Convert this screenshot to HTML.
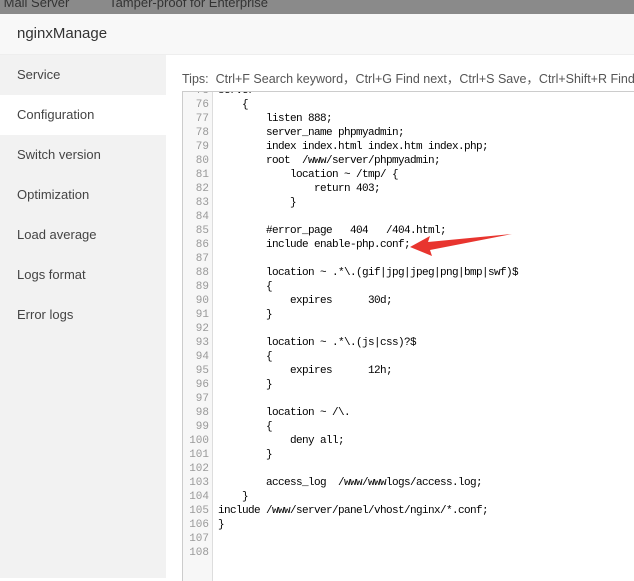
<!DOCTYPE html>
<html><head><meta charset="utf-8"><style>
*{margin:0;padding:0;box-sizing:border-box}
body{width:634px;height:578px;overflow:hidden;background:#fff;font-family:"Liberation Sans",sans-serif;position:relative}
.top{position:absolute;left:0;top:0;width:634px;height:14px;background:#8a8a8a;color:#333;font-size:13px;line-height:6px;overflow:hidden}
.hdr{position:absolute;left:0;top:14px;width:634px;height:41px;background:#f8f8f8;border-bottom:1px solid #eee;font-size:15px;color:#333;padding-left:17px;line-height:40px}
.side{position:absolute;left:0;top:55px;width:166px;height:523px;background:#f2f2f2}
.side div{height:40px;line-height:40px;padding-left:17px;font-size:13px;color:#444}
.side .on{background:#fff}
.tips{position:absolute;left:182px;top:68px;font-size:12.5px;color:#555;white-space:nowrap}
.ed{position:absolute;left:182px;top:91px;width:460px;height:490px;border-left:1px solid #ccc;border-top:1px solid #ccc;overflow:hidden}
.gut{position:absolute;left:0;top:0;width:30px;height:100%;background:#f7f7f7;border-right:1px solid #ddd}
.ln{position:absolute;left:0;width:26px;text-align:right;font:11px "Liberation Mono",monospace;color:#999;line-height:14px}
.cd{position:absolute;left:35px;font:11px "Liberation Mono",monospace;color:#000;line-height:14px;white-space:pre;letter-spacing:-0.6px}
</style></head><body>
<div class="top">&nbsp;Mail Server&nbsp;&nbsp;&nbsp;&nbsp;&nbsp;&nbsp;&nbsp;&nbsp;&nbsp;&nbsp;&nbsp;Tamper-proof for Enterprise</div>
<div class="hdr">nginxManage</div>
<div class="side"><div>Service</div><div class="on">Configuration</div><div>Switch version</div><div>Optimization</div><div>Load average</div><div>Logs format</div><div>Error logs</div></div>
<div class="tips">Tips:&nbsp; Ctrl+F Search keyword，Ctrl+G Find next，Ctrl+S Save，Ctrl+Shift+R Find</div>
<div class="ed"><div class="gut"></div>
<div id="c"></div>
</div>
<svg style="position:absolute;left:0;top:0" width="634" height="578"><path d="M410 247 L430 236 L428 242 L512 234 L430 250 L432 256 Z" fill="#e8352f"/></svg>
<script>
var L={75:"server",76:"    {",77:"        listen 888;",78:"        server_name phpmyadmin;",79:"        index index.html index.htm index.php;",80:"        root  /www/server/phpmyadmin;",81:"            location ~ /tmp/ {",82:"                return 403;",83:"            }",84:"",85:"        #error_page   404   /404.html;",86:"        include enable-php.conf;",87:"",88:"        location ~ .*\\.(gif|jpg|jpeg|png|bmp|swf)$",89:"        {",90:"            expires      30d;",91:"        }",92:"",93:"        location ~ .*\\.(js|css)?$",94:"        {",95:"            expires      12h;",96:"        }",97:"",98:"        location ~ /\\.",99:"        {",100:"            deny all;",101:"        }",102:"",103:"        access_log  /www/wwwlogs/access.log;",104:"    }",105:"include /www/server/panel/vhost/nginx/*.conf;",106:"}",107:"",108:""};
var h="";for(var n=75;n<=108;n++){var t=(n-76)*14+6;h+='<div class="ln" style="top:'+t+'px">'+n+'</div><div class="cd" style="top:'+t+'px">'+L[n].replace(/&/g,"&amp;").replace(/</g,"&lt;")+'</div>';}
document.getElementById("c").innerHTML=h;
</script>
</body></html>
